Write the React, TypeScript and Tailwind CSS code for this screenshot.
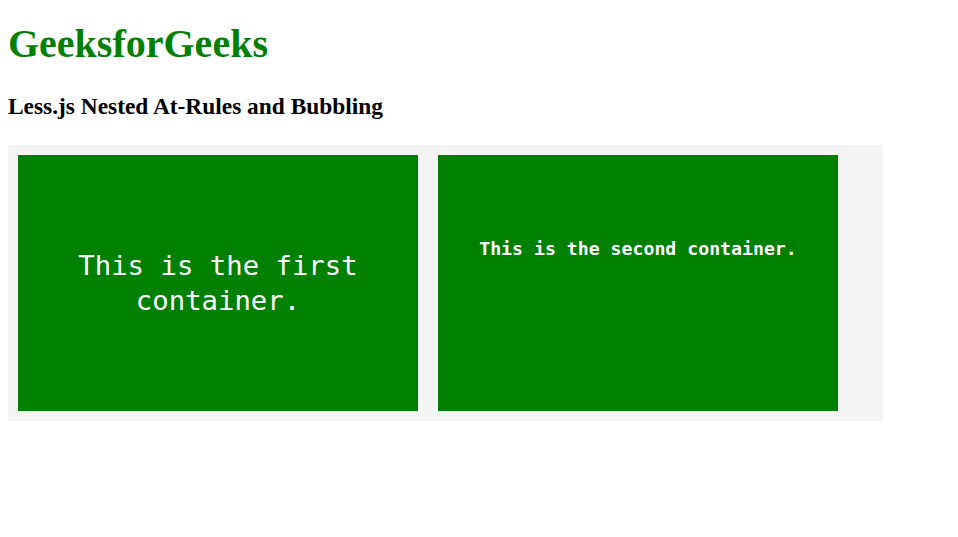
export default function App() {
  return (
    <div className="min-h-[537px] bg-white px-2" style={{ fontFamily: '"Liberation Serif", serif' }}>
      <h1 className="mt-[21px] text-[40px] font-bold leading-[46px] text-[#008000]">GeeksforGeeks</h1>
      <h3 className="mt-[26px] text-[23.4px] font-bold leading-[27px] text-black">
        Less.js Nested At-Rules and Bubbling
      </h3>
      <div className="mt-[25px] flex w-[875px] gap-5 bg-[#f4f4f4] p-[10px]">
        <div className="flex h-[256px] w-[400px] items-center justify-center bg-[#008000] text-center">
          <p className="font-['DejaVu_Sans_Mono',monospace] text-[27.3px] leading-[35px] text-white">
            This is the first container.
          </p>
        </div>
        <div className="h-[256px] w-[400px] bg-[#008000] pt-[83px] text-center">
          <p className="font-['DejaVu_Sans_Mono',monospace] text-[18.2px] font-bold leading-[21px] text-white">
            This is the second container.
          </p>
        </div>
      </div>
    </div>
  );
}
